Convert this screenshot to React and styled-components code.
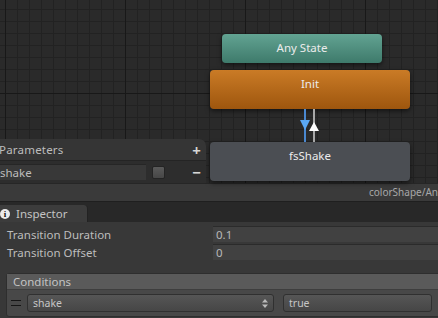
import styled, { createGlobalStyle } from "styled-components"

const Global = createGlobalStyle`
html, body {
  margin: 0;
  padding: 0;
  background: #383838;
  overflow: hidden;
}
body {
  font-family: "Noto Sans", "DejaVu Sans", sans-serif;
  font-size: 11px;
}
`

const Page = styled.div`
width: 438px;
height: 318px;
display: flex;
flex-direction: column;
overflow: hidden;
`

const Canvas = styled.div`
position: relative;
height: 183px;
flex: none;
background-color: #2a2a2a;
background-image:
  linear-gradient(to right, #181818 1px, transparent 1px),
  linear-gradient(to bottom, #181818 1px, transparent 1px),
  linear-gradient(to right, #222222 1px, transparent 1px),
  linear-gradient(to bottom, #222222 1px, transparent 1px);
background-size: 120px 120px, 120px 120px, 12px 12px, 12px 12px;
background-position: 5px 0, 0 93px, 5px 0, 0 9px;
`

const Node = styled.div`
position: absolute;
left: ${(p) => p.$x}px;
top: ${(p) => p.$y}px;
width: ${(p) => p.$w}px;
height: ${(p) => p.$h}px;
box-sizing: border-box;
border-radius: 4px;
background: ${(p) => p.$bg};
box-shadow: 0 2px 5px rgba(0, 0, 0, 0.55);
color: #ececec;
font-size: 11.5px;
text-align: center;
padding-top: ${(p) => p.$pt}px;
line-height: 14px;
`

const Wire = styled.svg`
position: absolute;
left: 296px;
top: 109px;
overflow: visible;
`

const Params = styled.div`
position: absolute;
left: 0;
bottom: 0;
width: 206px;
height: 44px;
display: flex;
flex-direction: column;
background: #2d2d2d;
border-top-right-radius: 7px;
`

const ParamsHead = styled.div`
height: 21px;
display: flex;
align-items: center;
justify-content: space-between;
padding: 0 5px 0 0;
background: #353535;
border-top-right-radius: 7px;
border-bottom: 1px solid #242424;
color: #bdbdbd;
font-size: 11.5px;
letter-spacing: 0.2px;
`

const ParamRow = styled.div`
flex: 1;
display: flex;
align-items: center;
padding-right: 5px;
`

const ParamField = styled.div`
width: 146px;
height: 16px;
box-sizing: border-box;
background: #383838;
border-top: 1px solid #262626;
color: #bdbdbd;
font-size: 11.5px;
line-height: 15px;
`

const Check = styled.div`
width: 11px;
height: 11px;
margin-left: 6px;
border-radius: 2px;
background: linear-gradient(#5a5a5a, #474747);
border: 1px solid #242424;
`

const Sign = styled.span`
margin-left: auto;
color: #d6d6d6;
font-size: 15px;
font-weight: bold;
line-height: 12px;
`

const Status = styled.div`
height: 17px;
flex: none;
background: #3a3a3a;
border-top: 1px solid #262626;
color: #a8a8a8;
font-size: 10px;
line-height: 17px;
padding-left: 369px;
white-space: nowrap;
overflow: hidden;
`

const TabStrip = styled.div`
height: 20px;
flex: none;
display: flex;
align-items: flex-end;
background: #282828;
border-top: 1px solid #1f1f1f;
`

const Tab = styled.div`
width: 88px;
height: 17px;
box-sizing: border-box;
display: flex;
align-items: center;
gap: 6px;
background: #3c3c3c;
border-top-right-radius: 4px;
border-right: 1px solid #222;
color: #c4c4c4;
font-size: 11.5px;
`

const InfoIcon = styled.span`
width: 10px;
height: 10px;
border-radius: 50%;
background: #ececec;
color: #111;
font-family: "Liberation Serif", serif;
font-weight: bold;
font-size: 9px;
line-height: 10px;
text-align: center;
`

const Body = styled.div`
flex: 1;
display: flex;
flex-direction: column;
padding-top: 4px;
background: #383838;
`

const PropRow = styled.div`
display: flex;
align-items: center;
height: 16px;
margin-bottom: 2px;
`

const Label = styled.div`
width: 213px;
padding-left: 7px;
box-sizing: border-box;
color: #bdbdbd;
font-size: 11.5px;
`

const Input = styled.div`
flex: 1;
height: 16px;
box-sizing: border-box;
padding-left: 3px;
background: #414141;
border-top: 1px solid #2b2b2b;
color: #b8b8b8;
font-size: 11.5px;
line-height: 15px;
`

const Conditions = styled.div`
margin: 11px -4px 0 6px;
border: 1px solid #2e2e2e;
border-radius: 3px;
background: #484848;
`

const CondHead = styled.div`
height: 15px;
background: #5a5a5a;
border-bottom: 1px solid #3e3e3e;
padding-left: 6px;
color: #c4c4c4;
font-size: 11.5px;
line-height: 15px;
`

const CondRow = styled.div`
height: 26px;
display: flex;
align-items: center;
padding-left: 4px;
`

const Handle = styled.div`
width: 10px;
height: 4px;
border-top: 1px solid #151515;
border-bottom: 1px solid #151515;
margin-right: 6px;
`

const Dropdown = styled.div`
width: ${(p) => p.$w || "auto"};
flex: ${(p) => (p.$w ? "none" : 1)};
height: 18px;
box-sizing: border-box;
display: flex;
align-items: center;
margin-right: 9px;
padding: 0 5px;
border-radius: 3px;
border: 1px solid #303030;
background: linear-gradient(#565656, #464646);
color: #c6c6c6;
font-size: 10.5px;
`

const Arrows = styled.svg`
margin-left: auto;
`

export default function App() {
  return (
    <Page>
      <Global />
      <Canvas>
        <Node $x={222} $y={34} $w={160} $h={29} $pt={7} $bg="linear-gradient(#62a392, #3e7a6b)">
          Any State
        </Node>
        <Node $x={210} $y={70} $w={200} $h={39} $pt={7} $bg="linear-gradient(#ca7b26, #9e560e)">
          Init
        </Node>
        <Node $x={210} $y={142} $w={200} $h={39} $pt={7} $bg="#4b4e53">
          fsShake
        </Node>
        <Wire width="30" height="33" viewBox="0 0 30 33">
          <rect x="8" y="0" width="2" height="33" fill="#4a88d0" />
          <rect x="17" y="0" width="2" height="33" fill="#a8a8a8" />
          <polygon points="4,11 14,11 9,21" fill="#5aa8f5" />
          <polygon points="18,13 13,22 23,22" fill="#ffffff" />
        </Wire>
        <Params>
          <ParamsHead>
            <span style={{ marginLeft: -1 }}>Parameters</span>
            <Sign>+</Sign>
          </ParamsHead>
          <ParamRow>
            <ParamField>shake</ParamField>
            <Check />
            <Sign>−</Sign>
          </ParamRow>
        </Params>
      </Canvas>
      <Status>colorShape/AnimatorController</Status>
      <TabStrip>
        <Tab>
          <InfoIcon>i</InfoIcon>
          Inspector
        </Tab>
      </TabStrip>
      <Body>
        <PropRow>
          <Label>Transition Duration</Label>
          <Input>0.1</Input>
        </PropRow>
        <PropRow>
          <Label>Transition Offset</Label>
          <Input>0</Input>
        </PropRow>
        <Conditions>
          <CondHead>Conditions</CondHead>
          <CondRow>
            <Handle />
            <Dropdown $w="247px">
              shake
              <Arrows width="6" height="9" viewBox="0 0 6 9">
                <polygon points="3,0 6,3.5 0,3.5" fill="#bbb" />
                <polygon points="0,5.5 6,5.5 3,9" fill="#bbb" />
              </Arrows>
            </Dropdown>
            <Dropdown>true</Dropdown>
          </CondRow>
        </Conditions>
      </Body>
    </Page>
  )
}
